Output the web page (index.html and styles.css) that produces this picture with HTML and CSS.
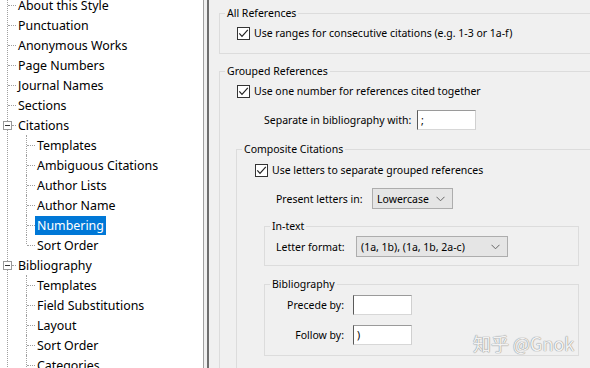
FILE: index.html
```html
<!DOCTYPE html>
<html>
<head>
<meta charset="utf-8">
<title>Numbering</title>
<link rel="stylesheet" href="styles.css">
</head>
<body>
<div class="app">
  <div class="tree">
    <ul class="l1">
      <li><div class="row"><span class="stub"></span><span class="lbl">About this Style</span></div></li>
      <li><div class="row"><span class="stub"></span><span class="lbl">Punctuation</span></div></li>
      <li><div class="row"><span class="stub"></span><span class="lbl">Anonymous Works</span></div></li>
      <li><div class="row"><span class="stub"></span><span class="lbl">Page Numbers</span></div></li>
      <li><div class="row"><span class="stub"></span><span class="lbl">Journal Names</span></div></li>
      <li><div class="row"><span class="stub"></span><span class="lbl">Sections</span></div></li>
      <li>
        <div class="row"><span class="pm"><span class="minus"></span></span><span class="stub short"></span><span class="lbl">Citations</span></div>
        <ul class="l2">
          <li class="row"><span class="stub"></span><span class="lbl">Templates</span></li>
          <li class="row"><span class="stub"></span><span class="lbl">Ambiguous Citations</span></li>
          <li class="row"><span class="stub"></span><span class="lbl">Author Lists</span></li>
          <li class="row"><span class="stub"></span><span class="lbl">Author Name</span></li>
          <li class="row"><span class="stub"></span><span class="lbl sel">Numbering</span></li>
          <li class="row last"><span class="stub"></span><span class="lbl">Sort Order</span></li>
        </ul>
      </li>
      <li>
        <div class="row"><span class="pm"><span class="minus"></span></span><span class="stub short"></span><span class="lbl">Bibliography</span></div>
        <ul class="l2">
          <li class="row"><span class="stub"></span><span class="lbl">Templates</span></li>
          <li class="row"><span class="stub"></span><span class="lbl">Field Substitutions</span></li>
          <li class="row"><span class="stub"></span><span class="lbl">Layout</span></li>
          <li class="row"><span class="stub"></span><span class="lbl">Sort Order</span></li>
          <li class="row"><span class="stub"></span><span class="lbl">Categories</span></li>
        </ul>
      </li>
    </ul>
  </div>
  <div class="splitter"></div>
  <div class="content">
    <fieldset class="grp g1">
      <legend>All References</legend>
      <div class="chk c1">
        <svg class="box" width="13" height="13" viewBox="0 0 13 13"><rect x="0.5" y="0.5" width="12" height="12" fill="#fff" stroke="#333"/><polyline points="2.3,6.3 5,9.3 10.8,2.8" fill="none" stroke="#222" stroke-width="1.2"/></svg>
        <span>Use ranges for consecutive citations (e.g. 1-3 or 1a-f)</span>
      </div>
    </fieldset>

    <fieldset class="grp g2">
      <legend>Grouped References</legend>
      <div class="chk c1">
        <svg class="box" width="13" height="13" viewBox="0 0 13 13"><rect x="0.5" y="0.5" width="12" height="12" fill="#fff" stroke="#333"/><polyline points="2.3,6.3 5,9.3 10.8,2.8" fill="none" stroke="#222" stroke-width="1.2"/></svg>
        <span>Use one number for references cited together</span>
      </div>
      <div class="field sep">
        <span class="flabel sep-l">Separate in bibliography with:</span>
        <span class="tb">;</span>
      </div>

      <fieldset class="grp comp">
        <legend>Composite Citations</legend>
        <div class="chk c2">
          <svg class="box" width="13" height="13" viewBox="0 0 13 13"><rect x="0.5" y="0.5" width="12" height="12" fill="#fff" stroke="#333"/><polyline points="2.3,6.3 5,9.3 10.8,2.8" fill="none" stroke="#222" stroke-width="1.2"/></svg>
          <span>Use letters to separate grouped references</span>
        </div>
        <div class="field present">
          <span class="flabel present-l">Present letters in:</span>
          <span class="combo combo-s"><span>Lowercase</span><svg width="9" height="6" viewBox="0 0 9 6"><polyline points="0.5,0.8 4.5,4.8 8.5,0.8" fill="none" stroke="#666" stroke-width="1"/></svg></span>
        </div>

        <fieldset class="grp sub intext">
          <legend>In-text</legend>
          <div class="field letter">
            <span class="flabel letter-l">Letter format:</span>
            <span class="combo combo-l"><span>(1a, 1b), (1a, 1b, 2a-c)</span><svg width="9" height="6" viewBox="0 0 9 6"><polyline points="0.5,0.8 4.5,4.8 8.5,0.8" fill="none" stroke="#666" stroke-width="1"/></svg></span>
          </div>
        </fieldset>

        <fieldset class="grp sub bib">
          <legend>Bibliography</legend>
          <div class="bibgrid">
            <span class="rlabel">Precede by:</span>
            <span class="tb"></span>
            <span class="rlabel">Follow by:</span>
            <span class="tb">)</span>
          </div>
        </fieldset>
      </fieldset>
    </fieldset>
  </div>
  <div class="watermark">知乎 @Gnok</div>
</div>
</body>
</html>
```

FILE: styles.css
```css
* { box-sizing: border-box; }
html, body { margin: 0; padding: 0; }
body {
  width: 590px;
  height: 368px;
  overflow: hidden;
  background: #f0f0f0;
}
.app {
  position: relative;
  display: flex;
  width: 590px;
  height: 368px;
  overflow: hidden;
}

/* ---------- tree ---------- */
.tree {
  width: 204px;
  flex: none;
  background: #fff;
  border-right: 1px solid #a0a0a0;
  padding-left: 7px;
  overflow: hidden;
  font-family: "Noto Sans", "Liberation Sans", sans-serif;
  font-size: 12.4px;
  color: #000;
}
.tree ul { list-style: none; margin: 0; padding: 0; }
.tree .l1 {
  margin-top: -5px;
  border-left: 1px dotted #a0a0a0;
}
.tree .l2 {
  margin-left: 18px;
}
.tree .l2 > .row {
  border-left: 1px dotted #a0a0a0;
}
.tree .l2 > .row.last {
  border-left: none;
  padding-left: 1px;
  background: repeating-linear-gradient(to bottom, #a0a0a0 0 1px, transparent 1px 2px) left top / 1px 10px no-repeat;
}
.row {
  display: flex;
  align-items: center;
  height: 20px;
}
.stub {
  width: 8px;
  flex: none;
  border-top: 1px dotted #a0a0a0;
}
.stub.short { width: 4px; }
.pm {
  width: 9px;
  height: 9px;
  flex: none;
  margin-left: -5px;
  background: #fff;
  border: 1px solid #999;
  display: flex;
  align-items: center;
  justify-content: center;
}
.minus {
  width: 5px;
  height: 1px;
  background: #333;
}
.lbl {
  padding: 0 2px;
  line-height: 19px;
  white-space: nowrap;
}
.lbl.sel {
  background: #0078d7;
  color: #fff;
}

/* ---------- splitter ---------- */
.splitter {
  width: 5px;
  flex: none;
  background: #f0f0f0;
  border-right: 2px solid #6e6e6e;
}

/* ---------- content ---------- */
.content {
  flex: 1;
  min-width: 0;
  padding-left: 10px;
  overflow: hidden;
  font-family: "Noto Sans", "Liberation Sans", sans-serif;
  font-size: 10.5px;
  color: #000;
}
.grp {
  border: 1px solid #dcdcdc;
  margin: 0;
  padding: 0;
  min-width: 0;
}
.grp > legend {
  padding: 0 2px;
  margin-left: 5px;
  line-height: 16px;
}
.g1 {
  margin: 5px -40px 0 0;
  padding-bottom: 12px;
}
.g2 {
  margin: 9px -40px 0 0;
  padding-bottom: 60px;
}
.chk {
  display: flex;
  align-items: center;
  gap: 4px;
  height: 16px;
  white-space: nowrap;
}
.chk .box { flex: none; }
.c1 { margin-top: 4px; padding-left: 17px; }
.c2 { margin-top: 5px; padding-left: 18px; }

.field {
  display: flex;
  align-items: center;
  white-space: nowrap;
}
.flabel { flex: none; }
.sep { margin-top: 11px; height: 20px; padding-left: 44px; }
.sep-l { width: 153px; }

.tb {
  display: block;
  width: 59px;
  height: 20px;
  flex: none;
  background: #fff;
  border: 1px solid;
  border-color: #9a9a9a #d0d0d0 #d7d7d7 #5a5a5a;
  padding-left: 3px;
  line-height: 18px;
}

.comp {
  margin: 11px -40px 0 16px;
  padding-bottom: 40px;
}
.present { margin-top: 10px; height: 21px; padding-left: 39px; }
.present-l { width: 96px; }

.combo {
  display: flex;
  align-items: center;
  justify-content: space-between;
  height: 21px;
  flex: none;
  background: #e5e5e5;
  border: 1px solid #adadad;
  padding: 0 7px 0 4px;
}
.combo-s { width: 81px; }
.combo-l { width: 152px; }

.sub {
  width: 315px;
  margin: 9px 0 0 27px;
}
.intext { padding-bottom: 8px; }
.letter { margin-top: 2px; height: 21px; padding-left: 11px; }
.letter-l { width: 80px; }

.bib { margin-top: 10px; padding-bottom: 10px; }
.bibgrid {
  margin-top: 3px;
  display: grid;
  grid-template-columns: 79px 59px;
  grid-auto-rows: 20px;
  column-gap: 9px;
  row-gap: 10px;
}
.rlabel {
  text-align: right;
  line-height: 20px;
}

/* ---------- watermark ---------- */
.watermark {
  position: absolute;
  left: 473px;
  top: 331px;
  font-family: "Noto Sans CJK SC", "Noto Sans", sans-serif;
  font-size: 18px;
  line-height: 24px;
  color: #f2f2f2;
  text-shadow: 0 0 1px #8a8a8a, 0 0 1px #8a8a8a;
  white-space: nowrap;
}
```
